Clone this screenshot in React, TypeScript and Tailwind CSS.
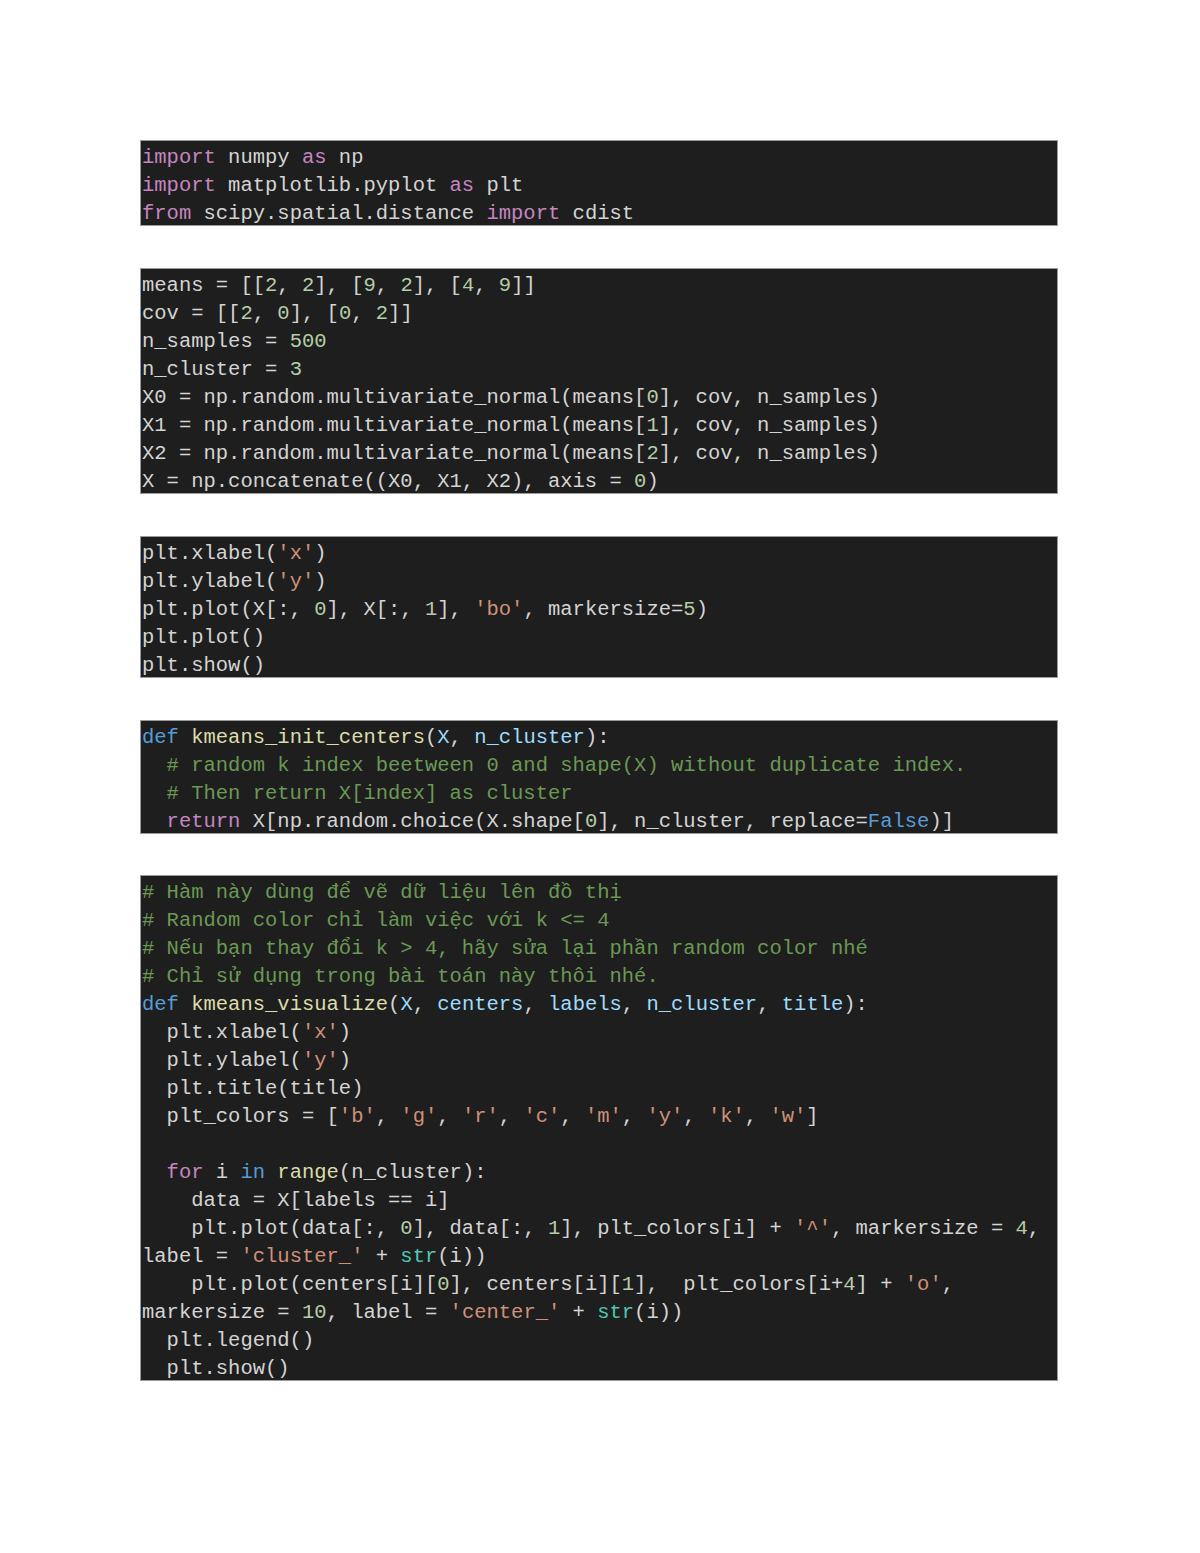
import React from "react";

type Seg = [string, string];
type Line = Seg[];

const D = "text-[#d4d4d4]";
const K = "text-[#c586c0]";
const N = "text-[#b5cea8]";
const S = "text-[#ce9178]";
const C = "text-[#6a9955]";
const B = "text-[#569cd6]";
const F = "text-[#dcdcaa]";
const P = "text-[#9cdcfe]";
const T = "text-[#4ec9b0]";

const block1: Line[] = [
  [["import", K], [" numpy ", D], ["as", K], [" np", D]],
  [["import", K], [" matplotlib.pyplot ", D], ["as", K], [" plt", D]],
  [["from", K], [" scipy.spatial.distance ", D], ["import", K], [" cdist", D]],
];

const block2: Line[] = [
  [["means = [[", D], ["2", N], [", ", D], ["2", N], ["], [", D], ["9", N], [", ", D], ["2", N], ["], [", D], ["4", N], [", ", D], ["9", N], ["]]", D]],
  [["cov = [[", D], ["2", N], [", ", D], ["0", N], ["], [", D], ["0", N], [", ", D], ["2", N], ["]]", D]],
  [["n_samples = ", D], ["500", N]],
  [["n_cluster = ", D], ["3", N]],
  [["X0 = np.random.multivariate_normal(means[", D], ["0", N], ["], cov, n_samples)", D]],
  [["X1 = np.random.multivariate_normal(means[", D], ["1", N], ["], cov, n_samples)", D]],
  [["X2 = np.random.multivariate_normal(means[", D], ["2", N], ["], cov, n_samples)", D]],
  [["X = np.concatenate((X0, X1, X2), axis = ", D], ["0", N], [")", D]],
];

const block3: Line[] = [
  [["plt.xlabel(", D], ["'x'", S], [")", D]],
  [["plt.ylabel(", D], ["'y'", S], [")", D]],
  [["plt.plot(X[:, ", D], ["0", N], ["], X[:, ", D], ["1", N], ["], ", D], ["'bo'", S], [", markersize=", D], ["5", N], [")", D]],
  [["plt.plot()", D]],
  [["plt.show()", D]],
];

const block4: Line[] = [
  [["def", B], [" ", D], ["kmeans_init_centers", F], ["(", D], ["X", P], [", ", D], ["n_cluster", P], ["):", D]],
  [["  # random k index beetween 0 and shape(X) without duplicate index.", C]],
  [["  # Then return X[index] as cluster", C]],
  [["  ", D], ["return", K], [" X[np.random.choice(X.shape[", D], ["0", N], ["], n_cluster, replace=", D], ["False", B], [")]", D]],
];

const block5: Line[] = [
  [["# Hàm này dùng để vẽ dữ liệu lên đồ thị", C]],
  [["# Random color chỉ làm việc với k <= 4", C]],
  [["# Nếu bạn thay đổi k > 4, hãy sửa lại phần random color nhé", C]],
  [["# Chỉ sử dụng trong bài toán này thôi nhé.", C]],
  [["def", B], [" ", D], ["kmeans_visualize", F], ["(", D], ["X", P], [", ", D], ["centers", P], [", ", D], ["labels", P], [", ", D], ["n_cluster", P], [", ", D], ["title", P], ["):", D]],
  [["  plt.xlabel(", D], ["'x'", S], [")", D]],
  [["  plt.ylabel(", D], ["'y'", S], [")", D]],
  [["  plt.title(title)", D]],
  [["  plt_colors = [", D], ["'b'", S], [", ", D], ["'g'", S], [", ", D], ["'r'", S], [", ", D], ["'c'", S], [", ", D], ["'m'", S], [", ", D], ["'y'", S], [", ", D], ["'k'", S], [", ", D], ["'w'", S], ["]", D]],
  [[" ", D]],
  [["  ", D], ["for", K], [" i ", D], ["in", B], [" ", D], ["range", F], ["(n_cluster):", D]],
  [["    data = X[labels == i]", D]],
  [["    plt.plot(data[:, ", D], ["0", N], ["], data[:, ", D], ["1", N], ["], plt_colors[i] + ", D], ["'^'", S], [", markersize = ", D], ["4", N], [",", D]],
  [["label = ", D], ["'cluster_'", S], [" + ", D], ["str", T], ["(i))", D]],
  [["    plt.plot(centers[i][", D], ["0", N], ["], centers[i][", D], ["1", N], ["],  plt_colors[i+", D], ["4", N], ["] + ", D], ["'o'", S], [",", D]],
  [["markersize = ", D], ["10", N], [", label = ", D], ["'center_'", S], [" + ", D], ["str", T], ["(i))", D]],
  [["  plt.legend()", D]],
  [["  plt.show()", D]],
];

function Block({ lines, className }: { lines: Line[]; className: string }) {
  return (
    <div className={`w-[918px] border border-[#9a9a9a] bg-[#1e1e1e] pl-px ${className}`}>
      {lines.map((line, i) => (
        <div key={i} className="h-[28px] whitespace-pre pt-[6px] leading-[22px]">
          {line.map(([text, color], j) => (
            <span key={j} className={color}>
              {text}
            </span>
          ))}
        </div>
      ))}
    </div>
  );
}

export default function App() {
  return (
    <div
      className="min-h-[1553px] w-[1200px] bg-white pl-[140px] pt-[140px] text-[20.5px]"
      style={{ fontFamily: '"Liberation Mono", "DejaVu Sans Mono", monospace' }}
    >
      <Block lines={block1} className="" />
      <Block lines={block2} className="mt-[42px]" />
      <Block lines={block3} className="mt-[42px]" />
      <Block lines={block4} className="mt-[42px]" />
      <Block lines={block5} className="mt-[41px]" />
    </div>
  );
}
